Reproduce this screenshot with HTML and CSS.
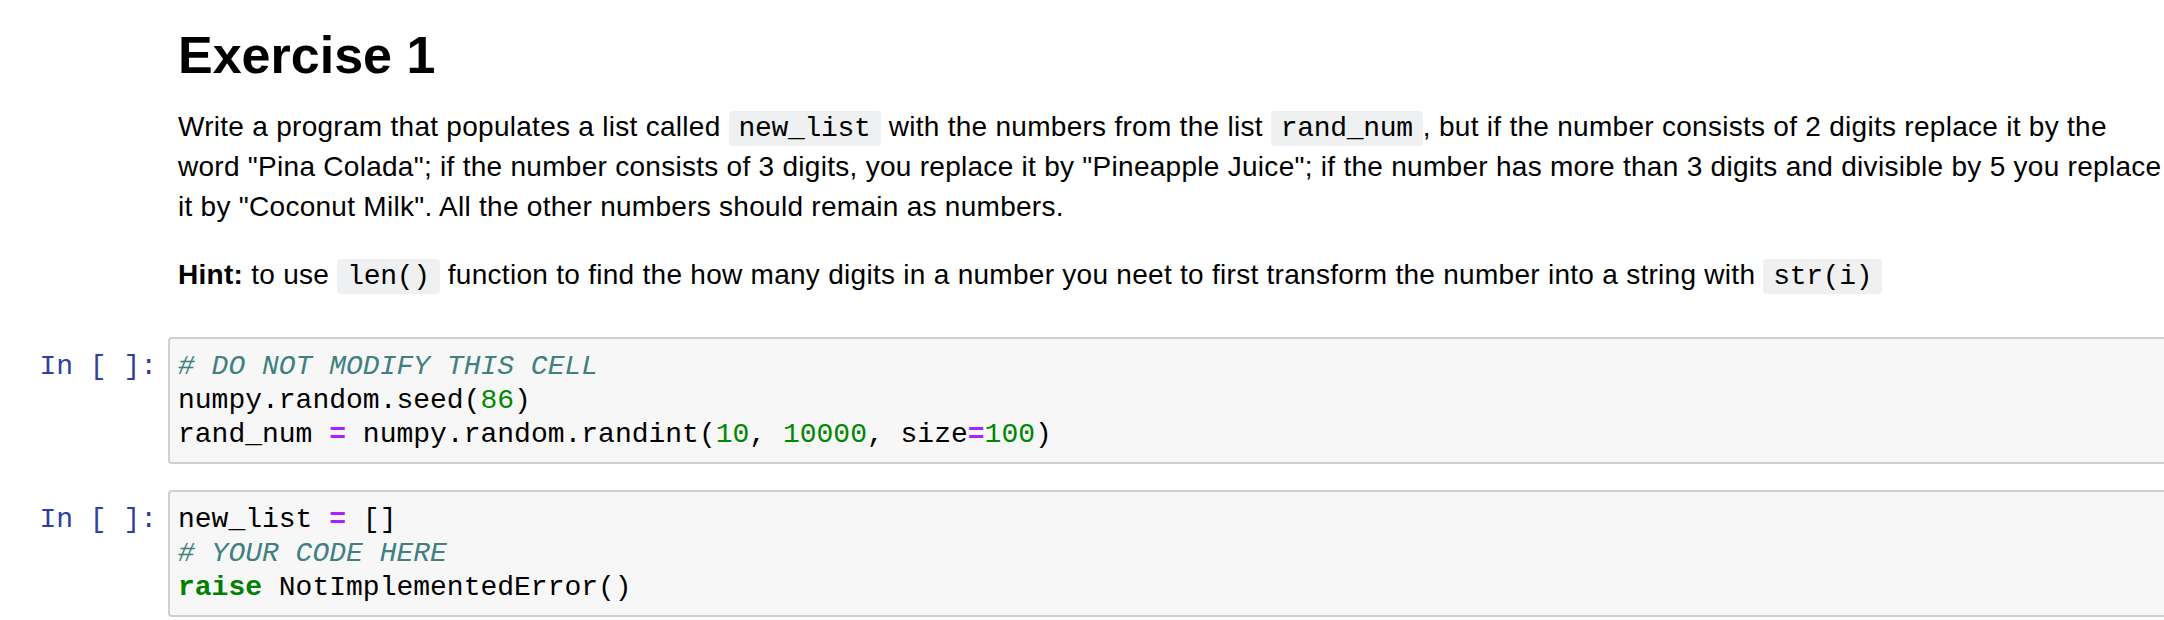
FILE: index.html
```html
<!DOCTYPE html>
<html lang="en">
<head>
<meta charset="utf-8">
<title>Exercise 1</title>
<link rel="stylesheet" href="styles.css">
</head>
<body>
<main class="notebook">
  <section class="cell text-cell">
    <div class="prompt"></div>
    <div class="rendered">
      <h1>Exercise 1</h1>
      <p>Write a program that populates a list called <code>new_list</code> with the numbers from the list <code>rand_num</code>, but if the number consists of 2 digits replace it by the word "Pina Colada"; if the number consists of 3 digits, you replace it by "Pineapple Juice"; if the number has more than 3 digits and divisible by 5 you replace it by "Coconut Milk". All the other numbers should remain as numbers.</p>
      <p><strong>Hint:</strong> to use <code>len()</code> function to find the how many digits in a number you neet to first transform the number into a string with <code>str(i)</code></p>
    </div>
  </section>

  <section class="cell code-cell first-code">
    <div class="prompt">In [ ]:</div>
    <div class="input-area"><pre><span class="cm-comment"># DO NOT MODIFY THIS CELL</span>
numpy.random.seed(<span class="cm-number">86</span>)
rand_num <span class="cm-operator">=</span> numpy.random.randint(<span class="cm-number">10</span>, <span class="cm-number">10000</span>, size<span class="cm-operator">=</span><span class="cm-number">100</span>)</pre></div>
  </section>

  <section class="cell code-cell">
    <div class="prompt">In [ ]:</div>
    <div class="input-area"><pre>new_list <span class="cm-operator">=</span> []
<span class="cm-comment"># YOUR CODE HERE</span>
<span class="cm-keyword">raise</span> NotImplementedError()</pre></div>
  </section>
</main>
</body>
</html>
```

FILE: styles.css
```css
html, body {
  margin: 0;
  padding: 0;
  background: #ffffff;
  overflow: hidden;
}

body {
  font-family: "Liberation Sans", Arial, Helvetica, sans-serif;
  color: #000000;
}

.notebook {
  width: 2200px;
  padding-top: 25px;
}

.cell {
  display: flex;
  align-items: flex-start;
}

.prompt {
  flex: 0 0 168px;
  box-sizing: border-box;
  padding-right: 11px;
  text-align: right;
  font-family: "Liberation Mono", "Courier New", monospace;
  font-size: 28px;
  line-height: 34px;
  color: #303f9f;
  white-space: pre;
}

.rendered {
  flex: 0 0 1994px;
  padding-left: 10px;
  font-size: 28px;
  line-height: 40px;
}

.rendered h1 {
  margin: 0 0 22px 0;
  font-size: 52px;
  line-height: 60px;
  font-weight: bold;
}

.rendered p {
  margin: 0 0 28px 0;
  letter-spacing: 0.28px;
}

.rendered p:last-child {
  margin-bottom: 0;
}

.rendered strong {
  font-weight: bold;
}

.rendered code {
  font-family: "Liberation Mono", "Courier New", monospace;
  font-size: 28px;
  line-height: 1;
  letter-spacing: -0.3px;
  background: #eff0f1;
  padding: 2px 10px 2px 10px;
  border-radius: 4px;
}

.code-cell {
  margin-top: 26px;
}

.code-cell.first-code {
  margin-top: 42px;
}

.code-cell .prompt {
  padding-top: 13px;
}

.input-area {
  flex: 1 1 auto;
  box-sizing: border-box;
  height: 127px;
  background: #f7f7f7;
  border: 2px solid #cfcfcf;
  border-radius: 4px;
  padding: 11px 8px 10px 8px;
}

.input-area pre {
  margin: 0;
  font-family: "Liberation Mono", "Courier New", monospace;
  font-size: 28px;
  line-height: 34px;
  color: #000000;
  white-space: pre;
}

.cm-comment {
  color: #408080;
  font-style: italic;
}

.cm-number {
  color: #008800;
}

.cm-operator {
  color: #aa22ff;
  font-weight: bold;
}

.cm-keyword {
  color: #008000;
  font-weight: bold;
}
```
